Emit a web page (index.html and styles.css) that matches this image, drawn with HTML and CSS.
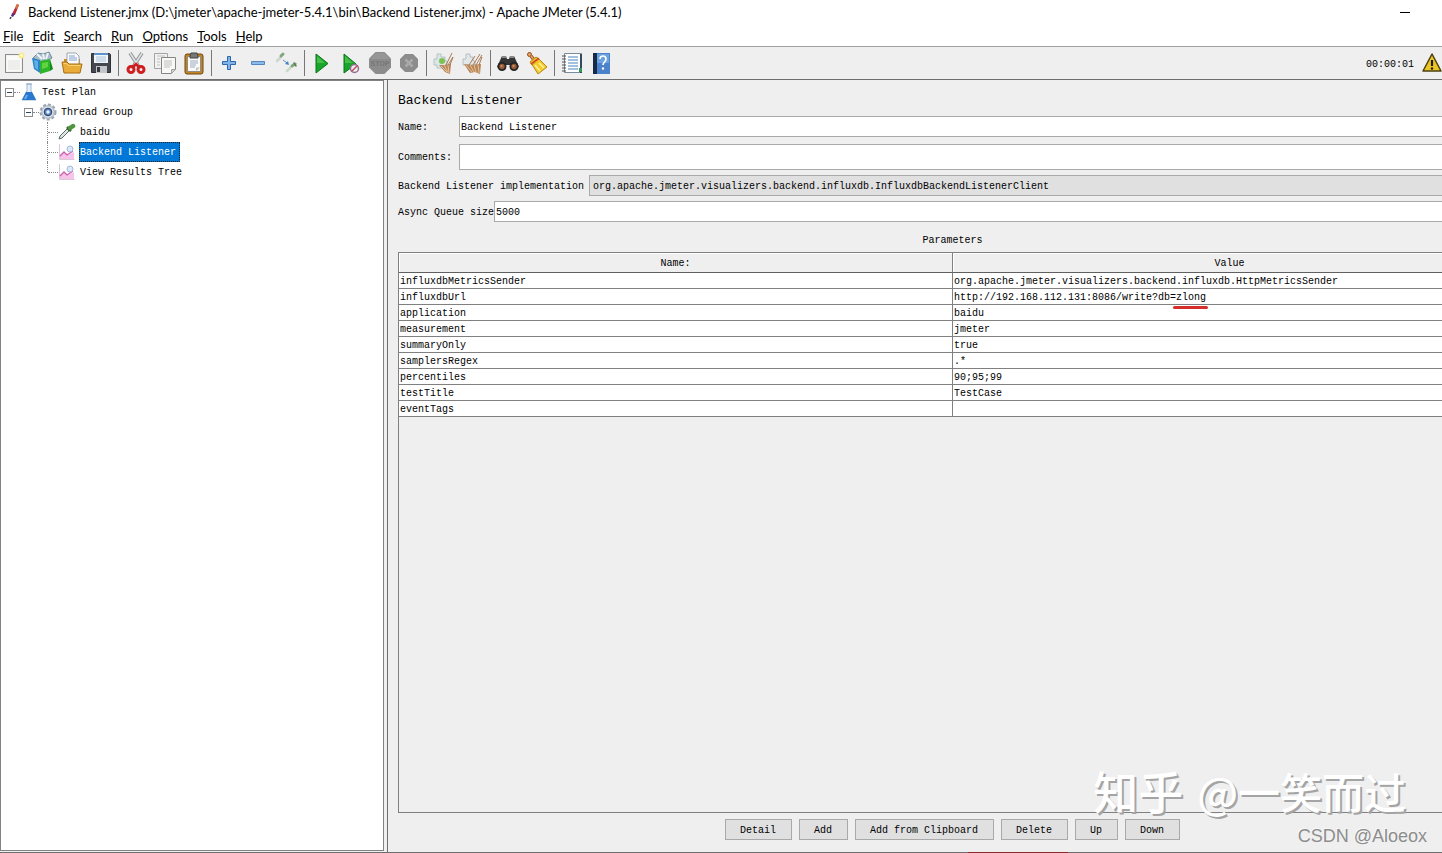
FILE: index.html
```html
<!DOCTYPE html>
<html lang="en">
<head>
<meta charset="utf-8">
<title>Backend Listener.jmx - Apache JMeter (5.4.1)</title>
<link rel="stylesheet" href="styles.css">
</head>
<body>
<div class="window">
  <header class="titlebar">
    <svg class="app-icon" width="12" height="18" viewBox="0 0 12 18"><path d="M9 1l2 1-4 10-3-1z" fill="#b52a3c"/><path d="M9 1l2 1-2 4-2-1z" fill="#e0703c"/><path d="M4 10l3 1-2 3-2-1z" fill="#57308a"/><path d="M3 14l-1 2" stroke="#444" stroke-width="1.500"/></svg>
    <h1 class="title">Backend Listener.jmx (D:\jmeter\apache-jmeter-5.4.1\bin\Backend Listener.jmx) - Apache JMeter (5.4.1)</h1>
    <button class="minimize" aria-label="Minimize"><span class="dash"></span></button>
  </header>

  <nav class="menubar">
    <button class="menu"><u>F</u>ile</button>
    <button class="menu"><u>E</u>dit</button>
    <button class="menu"><u>S</u>earch</button>
    <button class="menu"><u>R</u>un</button>
    <button class="menu"><u>O</u>ptions</button>
    <button class="menu"><u>T</u>ools</button>
    <button class="menu"><u>H</u>elp</button>
  </nav>

  <div class="toolbar">
    <button class="tool" aria-label="New"><svg width="22" height="24" viewBox="0 0 22 24"><rect x="2.500" y="3.500" width="17" height="18" fill="#f2f2f0" stroke="#8c8c88"/><path d="M4 5h14v15H4z" fill="#fafaf8"/><path d="M5 9h12v10H5z" fill="#eeeeec"/><circle cx="18.500" cy="4.500" r="3" fill="#f7ea8a"/><circle cx="18.500" cy="4.500" r="1.300" fill="#fffbe0"/></svg></button>
    <button class="tool" aria-label="Templates"><svg width="24" height="24" viewBox="0 0 24 24"><path d="M2 7l5-5 5 1 6-2 3 6-9 5z" fill="#a9bccb" stroke="#6f8b9d"/><path d="M6 3l5 5M12 3l1 5M17 2l-2 6" stroke="#eef4f8" stroke-width="2"/><path d="M1 7l8 2v13l-6-4z" fill="#2c83c9"/><path d="M3 9l4 1v9l-3-2z" fill="#5bb0e6"/><path d="M9 10l10-2v12L9 23z" fill="#2fb52c"/><path d="M11 12l6-1v5l-6 2z" fill="#5fd63f"/><path d="M19 8l3 10-3 2z" fill="#168a1c"/></svg></button>
    <button class="tool" aria-label="Open"><svg width="24" height="24" viewBox="0 0 24 24"><path d="M4 8h16v12H4z" fill="#c98a1c"/><path d="M7 2l9 0 3 3v9H7z" fill="#fbfbfb" stroke="#9aa5b0"/><path d="M9 5h6M9 7h8M9 9h8" stroke="#7ea0cf"/><path d="M2 11h5l2 2h13l-2 9H4z" fill="#e9ac38" stroke="#a86f10" stroke-linejoin="round"/><path d="M3.500 12.500h3l2 2h12" fill="none" stroke="#f8d277"/></svg></button>
    <button class="tool" aria-label="Save"><svg width="24" height="24" viewBox="0 0 24 24"><path d="M2.500 2.500h18l1 1v18h-19z" fill="#45484d" stroke="#2e3034"/><path d="M5 2h14v10H5z" fill="#eef5fb"/><path d="M5 2h14v2H5z" fill="#5c93ca"/><path d="M7 6h10M7 8h10M7 10h10" stroke="#b1c5d8"/><path d="M7 15h11v7H7z" fill="#c4c7ca"/><path d="M8 16h3v5H8z" fill="#36393c"/></svg></button>
    <span class="sep"></span>
    <button class="tool" aria-label="Cut"><svg width="24" height="24" viewBox="0 0 24 24"><path d="M6 2l9 14M18 2L9 16" stroke="#8b8e90" stroke-width="3.500"/><path d="M6 2l9 14M18 2L9 16" stroke="#dfe2e3" stroke-width="1.700"/><g fill="none" stroke="#cf1f20" stroke-width="3"><ellipse cx="7" cy="18.500" rx="3" ry="3"/><ellipse cx="17" cy="18.500" rx="3" ry="3"/></g><path d="M9 16l3-3 3 3" fill="none" stroke="#cf1f20" stroke-width="2.500"/></svg></button>
    <button class="tool" aria-label="Copy"><svg width="24" height="24" viewBox="0 0 24 24"><g fill="#f2f2f2" stroke="#a3a3a1"><path d="M1.500 2.500h13v15h-13z"/><path d="M8.500 6.500h14v12l-4 4h-10z" fill="#f8f8f8" stroke="#858583"/><path d="M18.500 22.500v-4h4z" fill="#d1d1cf"/></g><path d="M4 5h8M4 8h3M4 11h3M4 14h3M11 10h8M11 12h8M11 14h8M11 16h6" stroke="#c0c0be"/></svg></button>
    <button class="tool" aria-label="Paste"><svg width="24" height="24" viewBox="0 0 24 24"><rect x="3" y="3" width="18" height="20" rx="2" fill="#c38325" stroke="#70490f"/><path d="M5.500 5.500h13v15h-13z" fill="#fafafa" stroke="#908b82"/><path d="M8 5l1-3h6l1 3v2H8z" fill="#777975" stroke="#454743"/><path d="M8 10h8M8 12h8M8 14h6M8 16h5" stroke="#9aaabf"/><path d="M14 20.500v-4h4z" fill="#c5c6c2"/></svg></button>
    <span class="sep"></span>
    <button class="tool" aria-label="Expand All"><svg width="20" height="20" viewBox="0 0 20 20"><path d="M8.500 3.500h3v5h5v3h-5v5h-3v-5h-5v-3h5z" fill="#83b4e7" stroke="#2c67ae"/></svg></button>
    <button class="tool" aria-label="Collapse All"><svg width="20" height="20" viewBox="0 0 20 20"><path d="M3.500 8.500h13v3h-13z" fill="#8bbbe9" stroke="#5685bd"/></svg></button>
    <button class="tool" aria-label="Toggle"><svg width="24" height="24" viewBox="0 0 24 24"><g stroke-linecap="round"><path d="M2 10l4-4" stroke="#ccd8cc" stroke-width="2.500"/><path d="M6 5l2-2" stroke="#7fa67e" stroke-width="3"/><path d="M12 20l4-4" stroke="#ccd8cc" stroke-width="2.500"/><path d="M17 15l3-2" stroke="#7fa67e" stroke-width="3"/><path d="M19 12l2 3" stroke="#5d7f5c" stroke-width="1.500"/></g><path d="M8 9l4 3" stroke="#5a8dca"/><path d="M14 14l-4-1 3-3z" fill="#4782c5"/></svg></button>
    <span class="sep"></span>
    <button class="tool" aria-label="Start"><svg width="24" height="24" viewBox="0 0 24 24"><path d="M6 3l12 9.500L6 22z" fill="#18a52a" stroke="#08761b"/><path d="M7 5l8 7H7z" fill="#48be48"/></svg></button>
    <button class="tool" aria-label="Start no pauses"><svg width="24" height="24" viewBox="0 0 24 24"><path d="M5 3l12 10L5 22z" fill="#18a52a" stroke="#08761b"/><path d="M6 5l8 7H6z" fill="#48be48"/><circle cx="15.500" cy="17.500" r="4" fill="#eeeeee" stroke="#8b718f" stroke-width="1.500"/><path d="M12.500 20.500l6-6" stroke="#c44b5c" stroke-width="1.500"/></svg></button>
    <button class="tool" aria-label="Stop" disabled><svg width="24" height="24" viewBox="0 0 24 24"><path d="M7.500 1h9l6.500 6.500v9L16.500 23h-9L1 16.500v-9z" fill="#8c8c8c"/><path d="M8 2h8l6 6H2z" fill="#969696"/><text x="12" y="15" text-anchor="middle" class="stop-word">STOP</text></svg></button>
    <button class="tool" aria-label="Shutdown" disabled><svg width="24" height="24" viewBox="0 0 24 24"><path d="M8 3h8l5 5v8l-5 5H8l-5-5V8z" fill="#8c8c8c"/><path d="M8.500 8.500l7 7M15.500 8.500l-7 7" stroke="#a9a9a9" stroke-width="2.500"/></svg></button>
    <span class="sep"></span>
    <button class="tool" aria-label="Clear"><svg width="24" height="24" viewBox="0 0 24 24"><path d="M5 3h4v3h4v4h2v4h-2v3H5v-3H2V8h3z" fill="#dde6e6" stroke="#b4c2c4"/><circle cx="10" cy="10" r="3" fill="#7cc355"/><path d="M7 14l6 0 6-1-1 10-5-2z" fill="#b98558"/><path d="M9 15l6 6M12 14l4 7M16 14l1 8" stroke="#e3c49c"/><path d="M14 14l6-12M16 14l5-8M18 14l3-8" stroke="#a87a52"/></svg></button>
    <button class="tool" aria-label="Clear All"><svg width="24" height="24" viewBox="0 0 24 24"><path d="M5 3h4v3h3v4h2v4H2V8h3z" fill="#e2e8ea" stroke="#b4bec1"/><path d="M3 13l8 1 9-1-1 10-5-2-5 1z" fill="#b98558"/><path d="M5 14l6 7M9 14l4 7M13 14l2 7M17 14l1 8" stroke="#e3c49c"/><path d="M8 14l6-9M12 14l7-11M15 14l6-10M18 14l3-8" stroke="#a87a52"/></svg></button>
    <span class="sep"></span>
    <button class="tool" aria-label="Search"><svg width="24" height="24" viewBox="0 0 24 24"><path d="M6 5h4l1 3h2l1-3h4l5 11-8 3-1-5h-4l-1 5-8-3z" fill="#353535"/><path d="M6 6h4M14 6h4" stroke="#85898b" stroke-width="2"/><circle cx="6" cy="15.500" r="4.500" fill="#242424"/><circle cx="18" cy="15.500" r="4.500" fill="#242424"/><circle cx="6" cy="15.500" r="2.700" fill="#985b35"/><circle cx="18" cy="15.500" r="2.700" fill="#985b35"/><circle cx="5.500" cy="15" r="1" fill="#d49a6b"/><circle cx="17.500" cy="15" r="1" fill="#d49a6b"/></svg></button>
    <button class="tool" aria-label="Reset Search"><svg width="24" height="24" viewBox="0 0 24 24"><circle cx="4.500" cy="3.500" r="2" fill="#e8a25c" stroke="#8f4b22"/><path d="M6 5l3 4" stroke="#8f4b22" stroke-width="3.500"/><path d="M6 5l3 4" stroke="#e8a25c" stroke-width="1.700"/><path d="M6 12l7-5 9 9-9 7z" fill="#f3cb2e" stroke="#b98a13" stroke-linejoin="round"/><path d="M5 11l6-5 3 2-7 6z" fill="#f0bd2a" stroke="#b98a13"/><path d="M6 13l8-6" stroke="#d43e20" stroke-width="1.500"/><path d="M10 14l5 6M14 12l5 5" stroke="#fff09a" stroke-width="1.500"/></svg></button>
    <span class="sep"></span>
    <button class="tool" aria-label="Function Helper"><svg width="24" height="24" viewBox="0 0 24 24"><path d="M4.500 2.500h17v19h-17z" fill="#fbfdff" stroke="#7a8b99"/><path d="M20 3h2v19h-2z" fill="#334b60"/><path d="M8 6h10M8 9h10M8 12h10M8 15h10M8 18h10" stroke="#4c86bd"/><path d="M2 5h4M2 8h4M2 11h4M2 14h4M2 17h4M2 20h4" stroke="#505050"/><path d="M19 17h3v4h-3z" fill="#399557"/></svg></button>
    <button class="tool" aria-label="Help"><svg width="24" height="24" viewBox="0 0 24 24"><path d="M4 2h17v21H4z" fill="#4a83cb"/><path d="M4 2h4v21H4z" fill="#172b49"/><path d="M8 3h12v9H8z" fill="#6da1df"/><path d="M11 8c0-4 6-4 6 0 0 3-3 3-3 6" fill="none" stroke="#fff" stroke-width="1.700"/><circle cx="14" cy="17.500" r="1.200" fill="#fff"/></svg></button>
    <span class="elapsed">00:00:01</span>
    <button class="warning" aria-label="Log warnings"><svg width="20" height="20" viewBox="0 0 20 20"><path d="M10 1l9 17H1z" fill="#e9c625" stroke="#4c4010" stroke-width="1.500" stroke-linejoin="round"/><path d="M10 7v6" stroke="#221c08" stroke-width="2.200"/><circle cx="10" cy="15.500" r="1.200" fill="#221c08"/></svg></button>
  </div>

  <main class="workspace">
    <aside class="tree" aria-label="Test plan">
      <ul>
        <li class="node">
          <button class="toggle" aria-label="Collapse Test Plan"></button><span class="link"></span>
          <svg class="node-icon" width="18" height="20" viewBox="0 0 18 20"><path d="M7 2h4v7l5 9H2l5-9z" fill="#e6f0fa" stroke="#9db7d0"/><path d="M6 10h6l4 8H2z" fill="#2878cf"/><path d="M6 13l2 0-2 4H4z" fill="#72b1ec"/><path d="M6 2h6" stroke="#8fa8be"/></svg>
          <span class="label">Test Plan</span>
        </li>
        <li class="node level-1">
          <button class="toggle" aria-label="Collapse Thread Group"></button><span class="link"></span>
          <svg class="node-icon" width="18" height="20" viewBox="0 0 18 20"><circle cx="9" cy="10" r="7.500" fill="#e3e7ec" stroke="#9ba5b0" stroke-width="2" stroke-dasharray="3 2"/><circle cx="9" cy="10" r="6.200" fill="#dde3ea" stroke="#a3adb9"/><circle cx="9" cy="10" r="3.800" fill="#5c83bb" stroke="#203f70"/><circle cx="9" cy="10" r="1.700" fill="#eef5fd"/></svg>
          <span class="label">Thread Group</span>
        </li>
        <li class="node level-2">
          <span class="elbow"></span>
          <svg class="node-icon" width="18" height="20" viewBox="0 0 18 20"><path d="M1 17l1-3 7-7 2 2-7 7z" fill="#dce6e2" stroke="#5e6b66"/><path d="M9 5l4 4" stroke="#2c5b27" stroke-width="2.500"/><path d="M12 6l3-2" stroke="#4d963e" stroke-width="4.500" stroke-linecap="round"/></svg>
          <span class="label">baidu</span>
        </li>
        <li class="node level-2">
          <span class="elbow"></span>
          <svg class="node-icon" width="18" height="20" viewBox="0 0 18 20"><path d="M2 17V14l4-4 4 3 6-3v7z" fill="#f5c4e8"/><path d="M1.500 2v15.500h15" fill="none" stroke="#d9c9d8"/><path d="M2 14l4-4 3 3 6-4" fill="none" stroke="#ce5db0" stroke-width="1.300"/><circle cx="12" cy="7" r="3" fill="#dce8f9" stroke="#a5b8da"/></svg>
          <span class="label selected">Backend Listener</span>
        </li>
        <li class="node level-2">
          <span class="elbow last"></span>
          <svg class="node-icon" width="18" height="20" viewBox="0 0 18 20"><path d="M2 17V14l4-4 4 3 6-3v7z" fill="#f5c4e8"/><path d="M1.500 2v15.500h15" fill="none" stroke="#d9c9d8"/><path d="M2 14l4-4 3 3 6-4" fill="none" stroke="#ce5db0" stroke-width="1.300"/><circle cx="12" cy="7" r="3" fill="#dce8f9" stroke="#a5b8da"/></svg>
          <span class="label">View Results Tree</span>
        </li>
      </ul>
    </aside>

    <section class="editor">
      <div class="frame">
        <h2 class="heading">Backend Listener</h2>
        <div class="field name-row">
          <label class="short" for="name">Name:</label>
          <input id="name" type="text" value="Backend Listener">
        </div>
        <div class="field comments-row">
          <label class="short" for="comments">Comments:</label>
          <input id="comments" type="text">
        </div>
        <div class="field">
          <label class="spaced" for="impl">Backend Listener implementation</label>
          <select id="impl"><option>org.apache.jmeter.visualizers.backend.influxdb.InfluxdbBackendListenerClient</option></select>
        </div>
        <div class="field">
          <label for="queue">Async Queue size</label>
          <input id="queue" type="text" value="5000">
        </div>
        <h3 class="caption">Parameters</h3>
        <div class="table-pane">
          <table>
            <thead><tr><th class="name-col">Name:</th><th>Value</th></tr></thead>
            <tbody>
              <tr><td>influxdbMetricsSender</td><td>org.apache.jmeter.visualizers.backend.influxdb.HttpMetricsSender</td></tr>
              <tr><td>influxdbUrl</td><td>http://192.168.112.131:8086/write?db=<span class="marked">zlong</span></td></tr>
              <tr><td>application</td><td>baidu</td></tr>
              <tr><td>measurement</td><td>jmeter</td></tr>
              <tr><td>summaryOnly</td><td>true</td></tr>
              <tr><td>samplersRegex</td><td>.*</td></tr>
              <tr><td>percentiles</td><td>90;95;99</td></tr>
              <tr><td>testTitle</td><td>TestCase</td></tr>
              <tr><td>eventTags</td><td></td></tr>
            </tbody>
          </table>
        </div>
        <div class="actions">
          <button>Detail</button>
          <button>Add</button>
          <button>Add from Clipboard</button>
          <button>Delete</button>
          <button>Up</button>
          <button>Down</button>
        </div>
      </div>
    </section>
  </main>
  <div class="bottom-line"><span class="red-line"></span></div>
  <div class="watermark zhihu"><span class="site">知乎</span><span>@一笑而过</span></div>
  <div class="watermark csdn">CSDN @Aloeox</div>
</div>
</body>
</html>
```
FILE: styles.css
```css
* { box-sizing: border-box; }

body {
  margin: 0;
  background: #fff;
  color: #000;
  font: 10px/16px "Liberation Mono", monospace;
}

button, input, select {
  font: inherit;
  color: inherit;
  border-radius: 0;
  margin: 0;
}

.window {
  position: relative;
  display: flex;
  flex-direction: column;
  height: 100vh;
  overflow: hidden;
}

/* Title bar and menu */
.titlebar {
  display: flex;
  align-items: center;
  height: 24px;
  padding: 0 32px 0 8px;
}
.app-icon { margin-right: 8px; }
.title {
  flex: 1;
  margin: 0;
  font: 13px/24px Lato, sans-serif;
  white-space: nowrap;
}
.minimize {
  display: flex;
  align-items: center;
  width: 10px;
  height: 24px;
  padding: 0;
  border: 0;
  background: none;
}
.dash { width: 10px; height: 1px; background: #000; }

.menubar {
  display: flex;
  gap: 9px;
  height: 22px;
  padding-left: 3px;
}
.menu {
  padding: 0;
  border: 0;
  background: none;
  font: 13px/24px Lato, sans-serif;
}

/* Toolbar */
.toolbar {
  display: flex;
  align-items: center;
  height: 34px;
  border-top: 1px solid #a0a0a0;
  border-bottom: 1px solid #6e6e6e;
  background: #efefef;
}
.tool {
  display: flex;
  align-items: center;
  justify-content: center;
  width: 29px;
  height: 30px;
  padding: 0 1px 0 0;
  border: 0;
  background: none;
}
.sep {
  width: 6px;
  height: 26px;
  background: linear-gradient(#777, #777) 2px 0 / 1px 100% no-repeat;
}
.stop-word { font: bold 7px "Liberation Sans", sans-serif; fill: #777; }
.elapsed { margin-left: auto; padding-top: 3px; }
.warning {
  width: 20px;
  height: 20px;
  margin-left: 8px;
  padding: 0;
  border: 0;
  background: none;
}

/* Tree */
.workspace {
  display: flex;
  flex: 1;
  min-height: 0;
  background: #efefef;
}
.tree {
  width: 384px;
  margin-bottom: 1px;
  border: 1px solid #828282;
  background: #fff;
}
.tree ul { margin: 0; padding: 1px 0 0 4px; list-style: none; }
.node { display: flex; align-items: center; height: 20px; }
.level-1 { padding-left: 19px; }
.level-2 { padding-left: 42px; }
.toggle {
  width: 9px;
  height: 9px;
  padding: 0;
  border: 1px solid #8b8b8b;
  background: linear-gradient(#345, #345) center / 5px 1px no-repeat #fff;
}
.link { width: 6px; border-top: 1px dotted #888; }
.node-icon { flex: none; }
.label {
  height: 20px;
  margin-left: 3px;
  padding: 0 3px 0 1px;
  line-height: 22px;
  white-space: nowrap;
}
.selected {
  border: 1px dotted #222;
  padding: 0 3px 0 0;
  line-height: 20px;
  background: #0078d7;
  color: #fff;
}
.elbow { width: 11px; height: 20px; border-left: 1px dotted #888; }
.elbow::before {
  content: "";
  display: block;
  height: 10px;
  border-bottom: 1px dotted #888;
}
.elbow.last { height: 10px; align-self: flex-start; }

/* Editor */
.editor {
  flex: 1;
  min-width: 0;
  margin-left: 3px;
  border-left: 1px solid #6e6e6e;
  overflow: hidden;
}
/* The form is wider than the visible pane and is clipped on the right. */
.frame {
  display: flex;
  flex-direction: column;
  height: 100%;
  margin-right: -65px;
  padding: 0 0 12px 10px;
}
.heading { margin: 0; padding-top: 6px; font: 13px/30px "Liberation Mono", monospace; }
.field { display: flex; align-items: center; height: 21px; margin-bottom: 5px; }
.name-row { margin-bottom: 7px; }
.comments-row { height: 26px; }
.field label { padding-top: 2px; }
.short { width: 61px; }
.spaced { margin-right: 5px; }
.field input, .field select {
  flex: 1;
  min-width: 0;
  height: 100%;
  padding: 2px 1px 0;
  border: 1px solid #a9a9a9;
  background: #fff;
  appearance: none;
}
.field select { padding: 2px 3px 0; background: #e0e0e0; }

.caption { margin: 0; padding-top: 6px; height: 25px; font: inherit; text-align: center; }

.table-pane { flex: 1; min-height: 0; border: 1px solid #808080; }
table { width: 100%; border-collapse: separate; border-spacing: 0; table-layout: fixed; }
.name-col { width: 49.95%; }
th, td { height: 16px; padding: 1px 1px 0; line-height: 14px; border-bottom: 1px solid #808080; white-space: nowrap; }
td { padding-top: 2px; line-height: 13px; background: #fff; }
th + th, td + td { border-left: 1px solid #808080; }
th { height: 20px; padding-top: 2px; font-weight: normal; background: #efefef; border-bottom-color: #606060; box-shadow: inset 1px 1px #fff; }
.marked { position: relative; }
.marked::after {
  content: "";
  position: absolute;
  left: -3px;
  right: -2px;
  bottom: -6px;
  height: 3px;
  border-radius: 2px;
  background: #d42f2b;
}

.actions { display: flex; justify-content: center; gap: 7px; padding-top: 6px; }
.actions button {
  height: 21px;
  padding: 2px 15px 0 14px;
  border: 1px solid #a9a9a9;
  background: #e0e0e0;
}

.bottom-line { display: flex; height: 1px; background: #6e6e6e; }
.red-line { width: 100px; margin-left: 67.1%; background: #8a2a2a; }

/* Watermarks */
.watermark { position: absolute; white-space: nowrap; pointer-events: none; }
.zhihu {
  display: flex;
  align-items: center;
  gap: 14px;
  right: 36px;
  bottom: 32px;
  color: #fff;
  font: 500 42px/60px "Noto Sans CJK SC", sans-serif;
  text-shadow: 2px 2px #a4a4a4;
}
.site { font-size: 45px; }
.csdn {
  right: 15px;
  bottom: 6px;
  color: #8d8d8d;
  font: 18px/22px "Liberation Sans", sans-serif;
  text-shadow: -1px -1px #f8f8f8;
}
```
